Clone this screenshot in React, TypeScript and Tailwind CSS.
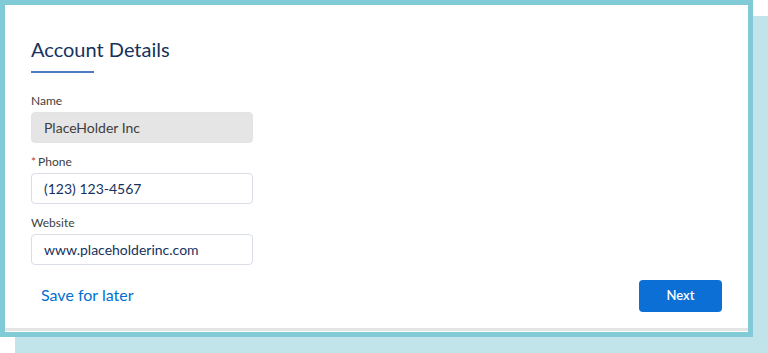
import React from 'react';

const font = { fontFamily: 'Lato, "Open Sans", Arial, sans-serif' };

function Field({
  label,
  value,
  required,
  disabled,
}: {
  label: string;
  value: string;
  required?: boolean;
  disabled?: boolean;
}) {
  return (
    <div className="flex flex-col">
      <label className="h-4 text-[12px] leading-4 text-[#3e3e3c]">
        {required && <span className="mr-[2px] text-[#c23934]">*</span>}
        {label}
      </label>
      <div
        className={
          disabled
            ? 'mt-[3px] flex h-[31px] w-[222px] items-center rounded-[4px] border border-[#e3e3e3] bg-[#e5e5e5] pl-3 text-[14px] text-[#3e3e3c]'
            : 'mt-[3px] flex h-[31px] w-[222px] items-center rounded-[4px] border border-[#d8dde6] bg-white pl-3 text-[14px] text-[#16325c]'
        }
      >
        {value}
      </div>
    </div>
  );
}

export default function App() {
  return (
    <div className="h-[353px] w-[768px] overflow-hidden bg-white" style={font}>
      {/* Card */}
      <div className="h-[337px] w-[753px] border-[5px] border-[#80cbd6] bg-white shadow-[15px_16px_0_0_#c1e4ea]">
        <div className="h-[326px] border-b-[3px] border-[#e4e4e4] px-[26px] pt-[30px]">
          {/* Header */}
          <h1 className="h-7 text-[20px] leading-7 text-[#16325c]">Account Details</h1>
          <div className="mt-2 h-[2px] w-[63px] bg-[#4c7bc3]" />

          {/* Fields */}
          <div className="mt-5 flex flex-col gap-[11px]">
            <Field label="Name" value="PlaceHolder Inc" disabled />
            <Field label="Phone" value="(123) 123-4567" required />
            <Field label="Website" value="www.placeholderinc.com" />
          </div>

          {/* Footer */}
          <div className="mt-[15px] flex items-center justify-between">
            <button className="pb-[2px] pl-[10px] text-[16px] text-[#0070d2]">Save for later</button>
            <button className="h-8 w-[83px] rounded-[4px] bg-[#0b6fd5] text-[13px] font-semibold text-white">
              Next
            </button>
          </div>
        </div>
      </div>
    </div>
  );
}
